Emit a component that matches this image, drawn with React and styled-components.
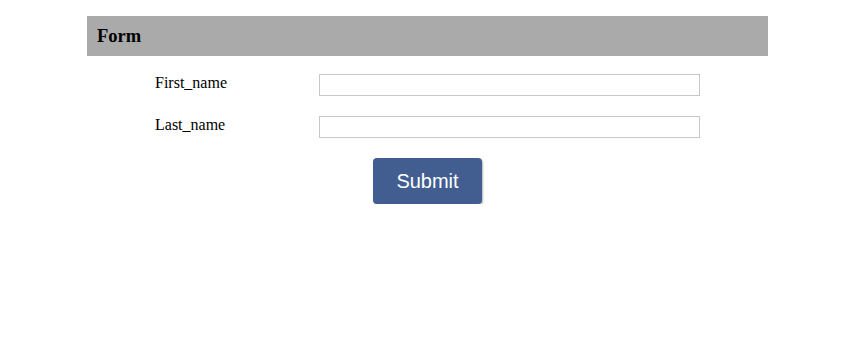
import styled, { createGlobalStyle } from "styled-components";

const GlobalStyle = createGlobalStyle`
  body {
    margin: 0;
    background: #fff;
    font-family: "Liberation Serif", "Times New Roman", serif;
  }
`;

const Page = styled.div`
  width: 681px;
  margin: 16px 0 0 87px;
`;

const Header = styled.h2`
  margin: 0;
  height: 40px;
  line-height: 40px;
  padding: 0 10px;
  background: #aaaaaa;
  color: #000;
  font-size: 18.5px;
  font-weight: bold;
`;

const Fields = styled.form`
  display: flex;
  flex-direction: column;
  gap: 20px;
  padding: 18px 0 0 68px;
`;

const Row = styled.div`
  display: grid;
  grid-template-columns: 164px 381px;
  align-items: center;
  height: 22px;
`;

const Label = styled.label`
  font-size: 16px;
  color: #000;
  margin-top: -5px;
`;

const Input = styled.input`
  box-sizing: border-box;
  width: 381px;
  height: 22px;
  margin: 0;
  border: 1px solid #c8c8c8;
  padding: 2px 4px;
  outline: none;
`;

const Actions = styled.div`
  padding-left: 218px;
`;

const Button = styled.button`
  width: 109px;
  height: 46px;
  border: none;
  border-radius: 4px;
  background: #425e91;
  color: #fff;
  font-family: "Liberation Sans", Arial, sans-serif;
  font-size: 20px;
  box-shadow: 1px 1px 2px rgba(0, 0, 0, 0.3);
  cursor: pointer;
`;

export default function App() {
  return (
    <Page>
      <GlobalStyle />
      <Header>Form</Header>
      <Fields onSubmit={(e) => e.preventDefault()}>
        <Row>
          <Label>First_name</Label>
          <Input type="text" />
        </Row>
        <Row>
          <Label>Last_name</Label>
          <Input type="text" />
        </Row>
        <Actions>
          <Button type="submit">Submit</Button>
        </Actions>
      </Fields>
    </Page>
  );
}
